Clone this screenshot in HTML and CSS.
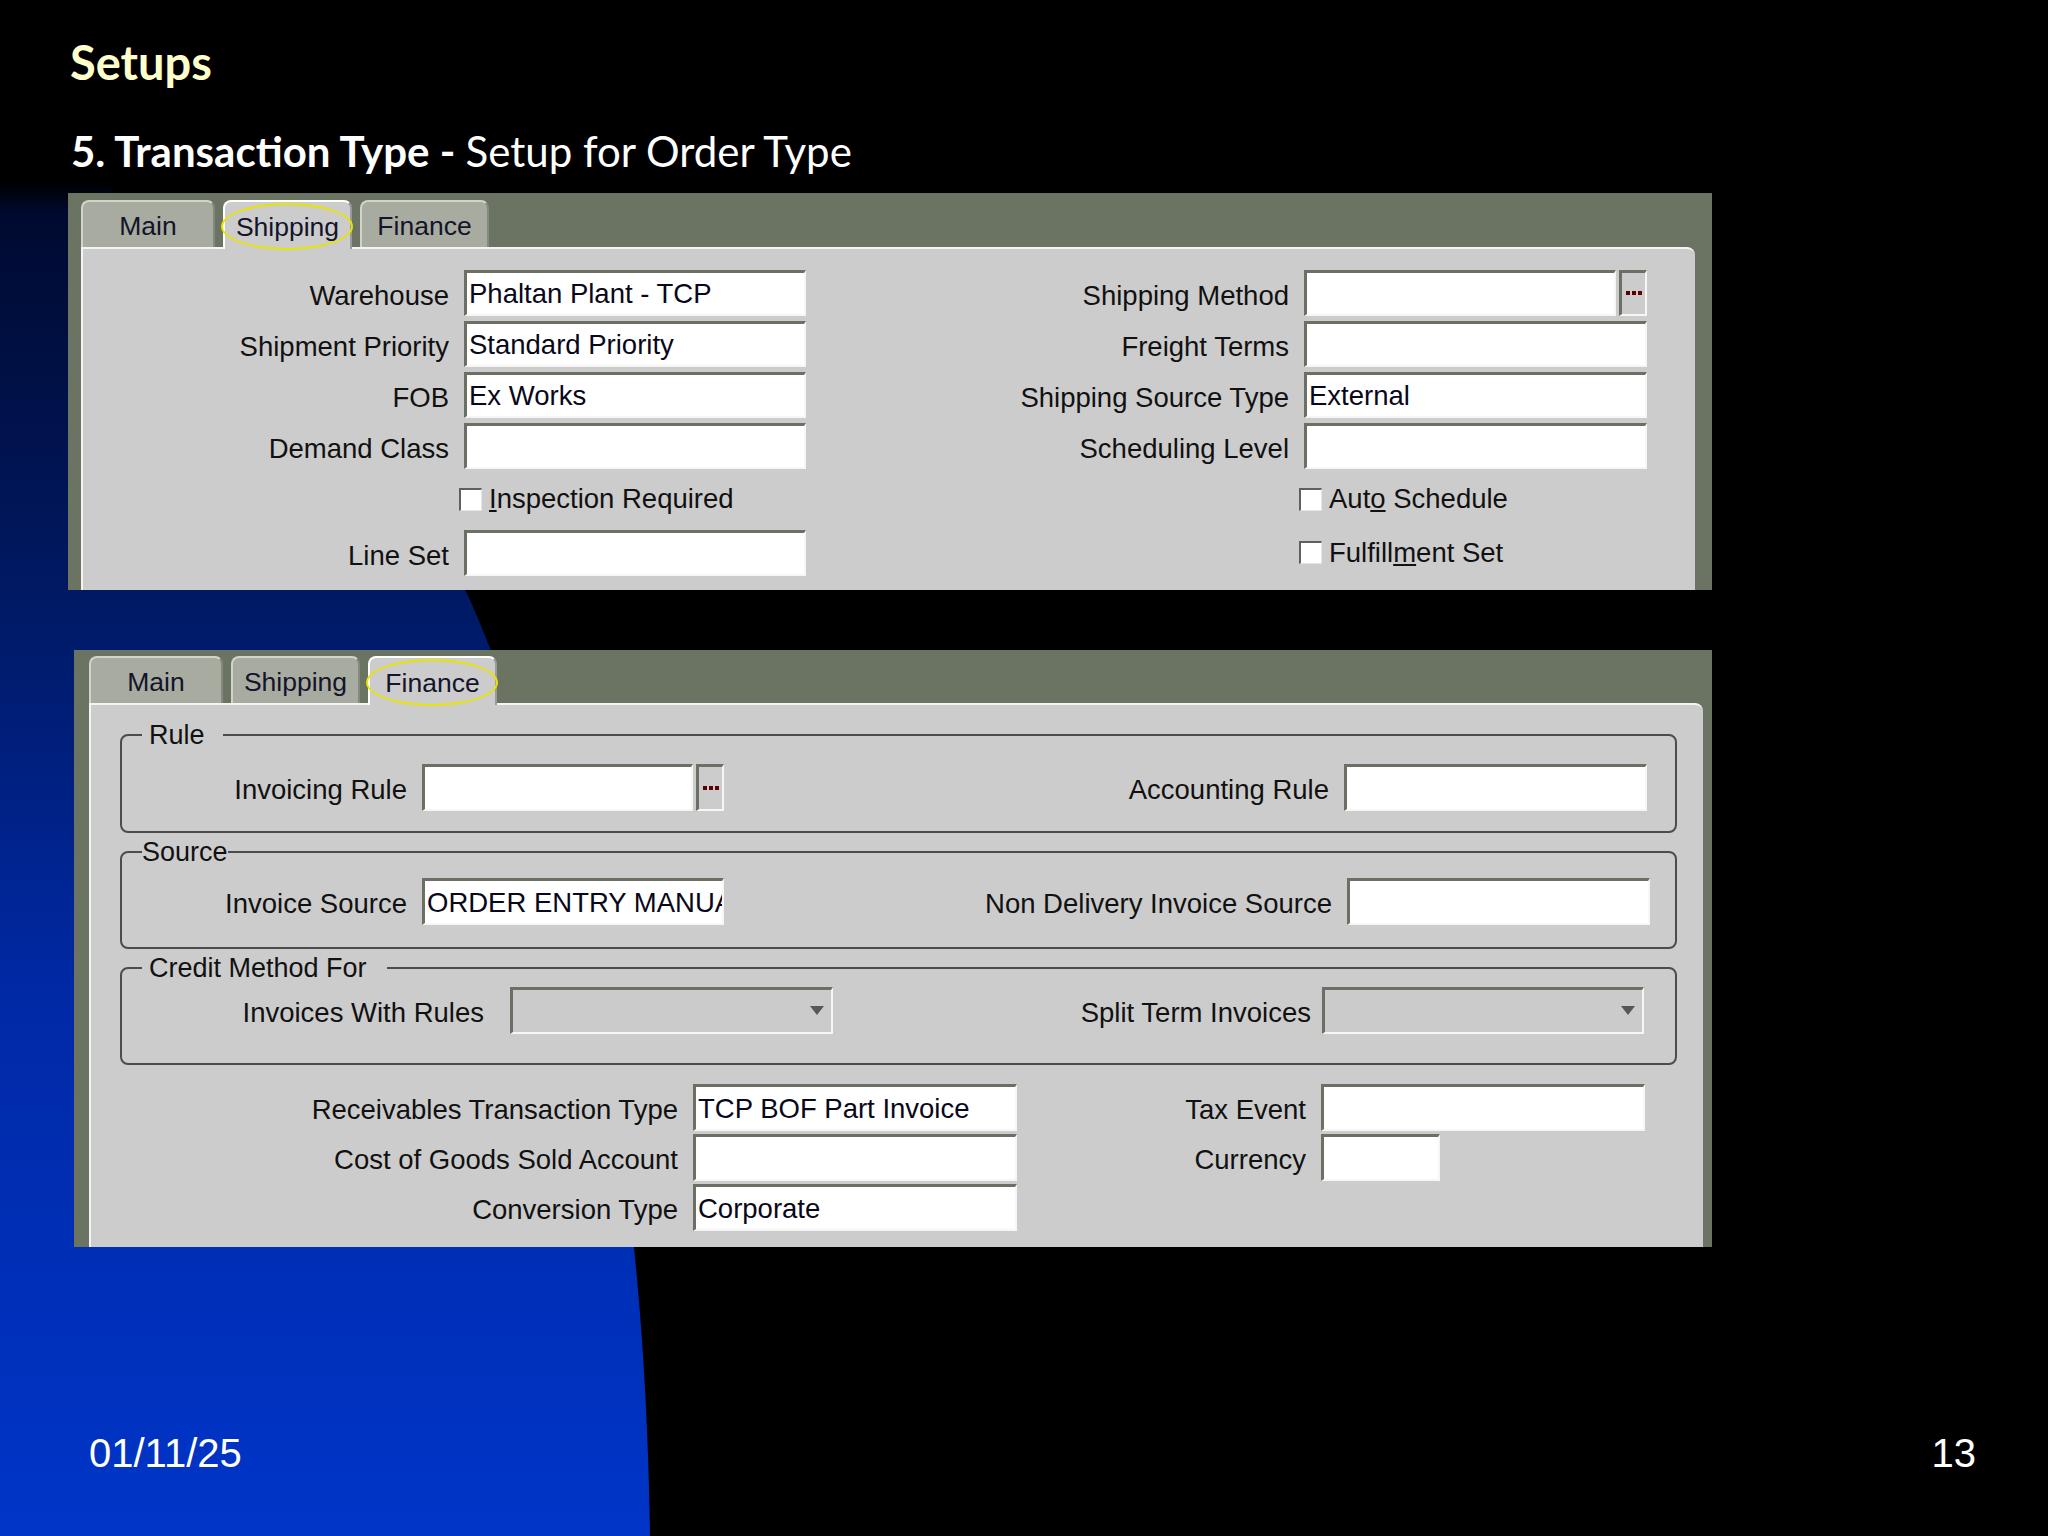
FILE: index.html
```html
<!DOCTYPE html>
<html lang="en">
<head>
<meta charset="utf-8">
<title>Setups</title>
<link rel="stylesheet" href="styles.css">
</head>
<body>
<div class="slide">
  <svg class="bg" width="2048" height="1536" viewBox="0 0 2048 1536" aria-hidden="true">
    <defs>
      <linearGradient id="blue" x1="0" y1="0" x2="0" y2="1536" gradientUnits="userSpaceOnUse">
        <stop offset="0" stop-color="#000000"/>
        <stop offset="0.118" stop-color="#000000"/>
        <stop offset="0.14" stop-color="#000a30"/>
        <stop offset="0.4" stop-color="#001a66"/>
        <stop offset="0.65" stop-color="#0029a6"/>
        <stop offset="1" stop-color="#0035c8"/>
      </linearGradient>
    </defs>
    <path d="M0,1536 L650,1536 C645,1200 600,900 470,600 C380,400 200,230 0,120 Z" fill="url(#blue)"/>
  </svg>

  <div class="main">
    <h1 class="title">Setups</h1>
    <h2 class="subtitle"><b>5. Transaction Type - </b>Setup for Order Type</h2>

    <section class="panel p1">
      <div class="tabs">
        <div class="tab">Main</div>
        <div class="tab sel">Shipping</div>
        <div class="tab">Finance</div>
      </div>
      <div class="body b1">
        <div class="g1">
          <span class="lbl">Warehouse</span>
          <div class="inp">Phaltan Plant - TCP</div>
          <span class="lbl">Shipping Method</span>
          <div class="lov"><div class="inp"></div><div class="btn"><i></i><i></i><i></i></div></div>

          <span class="lbl">Shipment Priority</span>
          <div class="inp">Standard Priority</div>
          <span class="lbl">Freight Terms</span>
          <div class="inp"></div>

          <span class="lbl">FOB</span>
          <div class="inp">Ex Works</div>
          <span class="lbl">Shipping Source Type</span>
          <div class="inp">External</div>

          <span class="lbl">Demand Class</span>
          <div class="inp"></div>
          <span class="lbl">Scheduling Level</span>
          <div class="inp"></div>

          <span class="lbl"></span>
          <div class="chk"><span class="box"></span><span><u>I</u>nspection Required</span></div>
          <span class="lbl"></span>
          <div class="chk"><span class="box"></span><span>Aut<u>o</u> Schedule</span></div>

          <span class="lbl">Line Set</span>
          <div class="inp"></div>
          <span class="lbl"></span>
          <div class="chk"><span class="box"></span><span>Fulfill<u>m</u>ent Set</span></div>
        </div>
      </div>
    </section>

    <section class="panel p2">
      <div class="tabs">
        <div class="tab">Main</div>
        <div class="tab">Shipping</div>
        <div class="tab sel">Finance</div>
      </div>
      <div class="body b2">
        <fieldset class="grp rule">
          <legend>Rule</legend>
          <div class="frow fr-rule">
            <span class="lbl">Invoicing Rule</span>
            <div class="lov"><div class="inp"></div><div class="btn"><i></i><i></i><i></i></div></div>
            <span class="lbl">Accounting Rule</span>
            <div class="inp"></div>
          </div>
        </fieldset>

        <fieldset class="grp src">
          <legend>Source</legend>
          <div class="frow fr-src">
            <span class="lbl">Invoice Source</span>
            <div class="inp">ORDER ENTRY MANUAL</div>
            <span class="lbl">Non Delivery Invoice Source</span>
            <div class="inp"></div>
          </div>
        </fieldset>

        <fieldset class="grp cred">
          <legend>Credit Method For</legend>
          <div class="frow fr-cred">
            <span class="lbl pr26">Invoices With Rules</span>
            <div class="dd"><span class="arrow"></span></div>
            <span class="lbl pr11">Split Term Invoices</span>
            <div class="dd"><span class="arrow"></span></div>
          </div>
        </fieldset>

        <div class="g2">
          <span class="lbl">Receivables Transaction Type</span>
          <div class="inp">TCP BOF Part Invoice</div>
          <span class="lbl">Tax Event</span>
          <div class="inp"></div>

          <span class="lbl">Cost of Goods Sold Account</span>
          <div class="inp"></div>
          <span class="lbl">Currency</span>
          <div class="inp short"></div>

          <span class="lbl">Conversion Type</span>
          <div class="inp">Corporate</div>
          <span class="lbl"></span>
          <span></span>
        </div>
      </div>
    </section>
  </div>

  <footer class="foot">
    <span>01/11/25</span>
    <span>13</span>
  </footer>
</div>
</body>
</html>
```

FILE: styles.css
```css
* { box-sizing: border-box; }

html, body {
  margin: 0;
  padding: 0;
  background: #000;
}

.slide {
  position: relative;
  width: 2048px;
  height: 1536px;
  overflow: hidden;
  background: #000;
  display: flex;
  flex-direction: column;
}

.bg {
  position: absolute;
  left: 0;
  top: 0;
}

.main {
  position: relative;
  padding: 34px 0 0 68px;
}

.title {
  margin: 0 0 0 2px;
  font: 700 47px/1.2 Lato, "Open Sans", sans-serif;
  color: #ffffcc;
}

.subtitle {
  margin: 36px 0 0 3px;
  font: 400 42px/1.2 Lato, "Open Sans", sans-serif;
  color: #ffffff;
}

.subtitle b { font-weight: 700; }

/* ---------- Oracle-forms style panels ---------- */

.panel {
  background: #6b7363;
  display: flex;
  flex-direction: column;
  font-family: "Liberation Sans", Arial, sans-serif;
  color: #111;
}

.p1 {
  margin-top: 16px;
  width: 1644px;
  height: 397px;
  padding: 7px 17px 0 13px;
}

.p2 {
  margin-top: 60px;
  margin-left: 6px;
  width: 1638px;
  height: 597px;
  padding: 6px 9px 0 15px;
}

.tabs {
  display: flex;
  align-items: flex-start;
  gap: 8px;
  height: 49px;
  flex: none;
}

.tab {
  width: 129px;
  height: 47px;
  border-radius: 8px 8px 0 0;
  background: #a8aba0;
  border-top: 2px solid #d2d4cc;
  border-left: 2px solid #d2d4cc;
  border-right: 2px solid #858a7e;
  display: flex;
  align-items: center;
  justify-content: center;
  font-size: 26.5px;
  line-height: 30px;
  color: #14142a;
  padding-top: 3px;
}

.tab:first-child { width: 134px; }

.tab.sel {
  position: relative;
  z-index: 2;
  height: 49px;
  background: #cccccc;
  border-top-color: #ffffff;
  border-left-color: #ffffff;
  border-right-color: #9a9a9a;
}

.tab.sel::after {
  content: "";
  position: absolute;
  left: -4px;
  right: -3px;
  top: 1px;
  bottom: -1px;
  border: 2px solid #e8e400;
  border-radius: 50%;
}

.body {
  flex: 1;
  margin-top: -2px;
  overflow: hidden;
  background: #cccccc;
  border-top: 2px solid #f4f4f4;
  border-left: 2px solid #f4f4f4;
  border-top-right-radius: 8px;
}

/* ---------- form rows ---------- */

.g1 {
  display: grid;
  grid-template-columns: 381px 342px 498px 343px;
  grid-template-rows: 46px 46px 46px 46px 51px 46px;
  row-gap: 5px;
  padding-top: 21px;
}

.lbl {
  align-self: center;
  text-align: right;
  padding-right: 15px;
  padding-top: 6px;
  font-size: 27.5px;
  line-height: 32px;
  white-space: nowrap;
  color: #111;
}

.lbl.pr26 { padding-right: 26px; }
.lbl.pr11 { padding-right: 11px; }

.inp {
  display: flex;
  align-items: center;
  height: 100%;
  padding: 1px 2px 0 2px;
  background: #ffffff;
  border-style: solid;
  border-width: 3px 2px 2px 3px;
  border-color: #6b7065 #f6f6f6 #f6f6f6 #6b7065;
  font-size: 27.5px;
  line-height: 1;
  color: #08081a;
  white-space: nowrap;
  overflow: hidden;
}

.inp.short {
  width: 119px;
}

.lov {
  display: flex;
  gap: 3px;
  height: 100%;
}

.lov .inp { flex: 1; }

.btn {
  flex: none;
  width: 28px;
  height: 100%;
  background: #cccccc;
  border-style: solid;
  border-width: 3px 2px 2px 3px;
  border-color: #6b7065 #f6f6f6 #f6f6f6 #6b7065;
  display: flex;
  align-items: center;
  justify-content: center;
  gap: 2px;
}

.btn i {
  display: block;
  width: 4px;
  height: 4px;
  background: #5c0000;
}

.chk {
  display: flex;
  align-items: center;
  gap: 7px;
  margin-left: -5px;
  font-size: 27.5px;
  white-space: nowrap;
  color: #111;
}

.box {
  flex: none;
  width: 23px;
  height: 23px;
  background: #ffffff;
  border-style: solid;
  border-width: 2px 1px 1px 2px;
  border-color: #5f5f5f #e6e6e6 #e6e6e6 #5f5f5f;
}

/* ---------- group boxes ---------- */

.grp {
  margin: 15px 26px 0 29px;
  min-width: 0;
  border: 2px solid #4c4c4c;
  border-radius: 8px;
  padding: 14px 0 20px 0;
}

.grp + .grp { margin-top: 4px; }

.grp legend {
  margin-left: 20px;
  padding: 0 18px 0 7px;
  font-size: 27px;
  line-height: 30px;
  color: #111;
}

.src { padding: 11px 0 22px 0; }
.src legend { padding: 0; }
.cred { padding: 4px 0 29px 0; }
.cred legend { padding-right: 20px; }

.frow {
  display: grid;
  height: 47px;
}

.fr-rule { grid-template-columns: 300px 302px 620px 303px; }
.fr-src  { grid-template-columns: 300px 302px 623px 303px; }
.fr-cred { grid-template-columns: 388px 323px 489px 322px; }

.dd {
  display: flex;
  align-items: center;
  justify-content: flex-end;
  height: 100%;
  padding-right: 7px;
  background: #cbcbcb;
  border-style: solid;
  border-width: 3px 2px 2px 3px;
  border-color: #6b7065 #f6f6f6 #f6f6f6 #6b7065;
}

.arrow {
  width: 0;
  height: 0;
  border-left: 7px solid transparent;
  border-right: 7px solid transparent;
  border-top: 9px solid #575757;
}

.g2 {
  display: grid;
  grid-template-columns: 602px 324px 304px 324px;
  grid-template-rows: 47px 47px 47px;
  row-gap: 3px;
  margin-top: 19px;
}

/* ---------- footer ---------- */

.foot {
  position: relative;
  margin-top: auto;
  display: flex;
  justify-content: space-between;
  padding: 0 72px 60px 89px;
  font: 400 40px/46px "Liberation Sans", Arial, sans-serif;
  color: #ffffff;
}
```
